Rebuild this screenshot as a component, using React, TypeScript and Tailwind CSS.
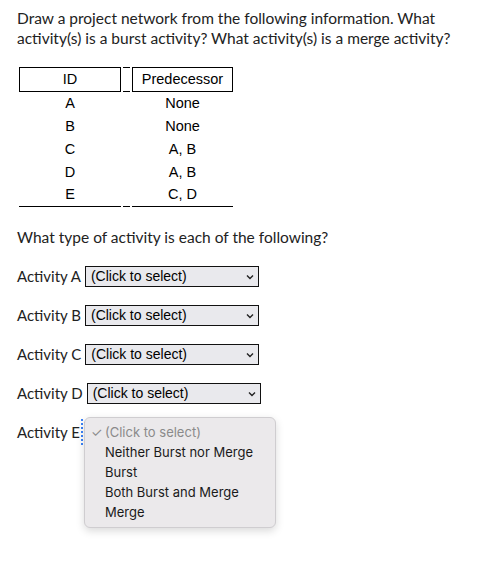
import React from "react";

const rows: [string, string][] = [
  ["A", "None"],
  ["B", "None"],
  ["C", "A, B"],
  ["D", "A, B"],
  ["E", "C, D"],
];

function Chevron() {
  return (
    <svg width="8" height="6" viewBox="0 0 8 6" className="shrink-0">
      <path d="M1 1.5 L4 4.5 L7 1.5" fill="none" stroke="#222" strokeWidth="1.4" />
    </svg>
  );
}

function Select() {
  return (
    <div className="flex h-[21px] w-[174px] items-center justify-between border border-[#111] bg-[#e9e9ed] pl-[5px] pr-[4px] text-[14px] text-black [font-family:'Liberation_Sans',Arial,sans-serif]">
      <span>(Click to select)</span>
      <Chevron />
    </div>
  );
}

export default function App() {
  return (
    <div className="min-h-[566px] w-[501px] bg-white pl-[17px] pt-[8px] text-[#222] [font-family:Lato,'Open_Sans',sans-serif]">
      <p className="text-[15.5px] leading-[20px]">
        Draw a project network from the following information. What
        <br />
        activity(s) is a burst activity? What activity(s) is a merge activity?
      </p>

      <div className="mt-[19px] ml-[2px] w-[214px] text-[14.5px] text-black [font-family:'Liberation_Sans',Arial,sans-serif]">
        <div className="flex h-[25px]">
          <div className="flex w-[102px] items-center justify-center border border-black">ID</div>
          <div className="flex w-[11px] flex-col justify-between px-[2px]">
            <div className="h-px bg-black" />
            <div className="h-px bg-black" />
          </div>
          <div className="flex w-[101px] items-center justify-center border border-black">Predecessor</div>
        </div>
        {rows.map(([id, pred], i) => (
          <div key={id} className="flex h-[23px]">
            <div className={`flex w-[102px] items-center justify-center ${i === rows.length - 1 ? "border-b border-black" : ""}`}>{id}</div>
            <div className="flex w-[11px] flex-col justify-end px-[2px]">
              {i === rows.length - 1 && <div className="h-px bg-black" />}
            </div>
            <div className={`flex w-[101px] items-center justify-center ${i === rows.length - 1 ? "border-b border-black" : ""}`}>{pred}</div>
          </div>
        ))}
      </div>

      <p className="mt-[20px] text-[15.5px] leading-[20px]">What type of activity is each of the following?</p>

      <div className="mt-[19px] flex flex-col gap-[18px] text-[15px]">
        {["A", "B", "C", "D"].map((l) => (
          <div key={l} className="flex h-[21px] items-center gap-[4px]">
            <span>Activity {l}</span>
            <Select />
          </div>
        ))}
        <div className="relative flex h-[21px] items-center gap-[4px]">
          <span>Activity E</span>
          <div className="relative">
            <div className="absolute left-[-3px] top-[-3px] h-[26px] border-l-2 border-dotted border-[#3b82f6]" />
            <Select />
            <div className="absolute left-[0px] top-[-5px] w-[192px] rounded-[6px] border border-[#cfcdd0] bg-[#ebe9eb] pt-[5px] pb-[4px] text-[13px] text-[#1a1a1a] shadow-[0_3px_8px_rgba(0,0,0,0.15)] [font-family:Inter,'Liberation_Sans',sans-serif]">
              <div className="flex h-[20px] items-center pl-[6px] text-[#8a8a8a]">
                <span className="w-[14px]">✓</span>
                <span>(Click to select)</span>
              </div>
              {["Neither Burst nor Merge", "Burst", "Both Burst and Merge", "Merge"].map((o) => (
                <div key={o} className="flex h-[20px] items-center pl-[20px]">{o}</div>
              ))}
            </div>
          </div>
        </div>
      </div>
    </div>
  );
}
